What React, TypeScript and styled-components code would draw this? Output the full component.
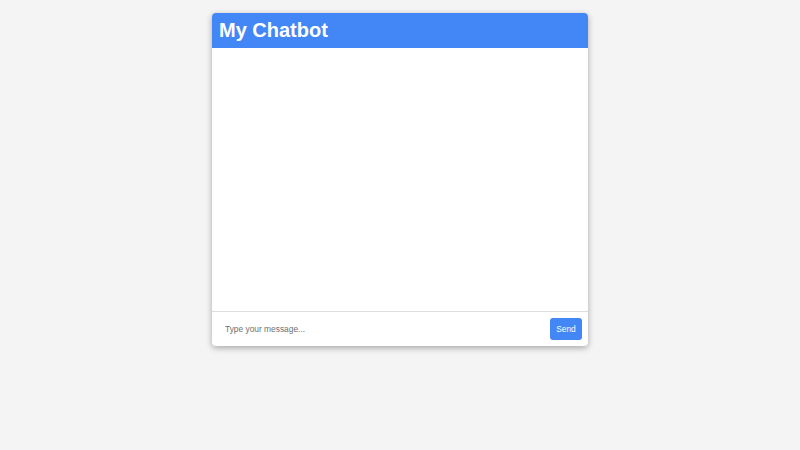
import { useState } from 'react';
import styled, { createGlobalStyle } from 'styled-components';

const GlobalStyle = createGlobalStyle`
  html, body {
    margin: 0;
    padding: 0;
    background: #f4f4f4;
    font-family: "Liberation Sans", Arial, sans-serif;
  }
`;

const Page = styled.div`
  min-height: 100vh;
  padding: 13px 0 20px;
  box-sizing: border-box;
`;

const ChatContainer = styled.div`
  width: 376px;
  height: 333px;
  margin: 0 auto;
  background: #ffffff;
  border-radius: 4px;
  box-shadow: 0 2px 6px rgba(0, 0, 0, 0.32);
  display: flex;
  flex-direction: column;
  overflow: hidden;
`;

const Header = styled.header`
  background: #4287f5;
  color: #ffffff;
  height: 35px;
  padding: 0 7px;
  display: flex;
  align-items: center;

  h1 {
    margin: 0;
    font-size: 20px;
    font-weight: bold;
  }
`;

const Messages = styled.div`
  flex: 1;
  overflow-y: auto;
  border-bottom: 1px solid #dddddd;
`;

const InputRow = styled.form`
  height: 34px;
  display: flex;
  align-items: center;
  padding: 0 6px 0 7px;
  gap: 6px;
`;

const MessageInput = styled.input`
  flex: 1;
  border: none;
  outline: none;
  padding: 0 6px;
  font-family: inherit;
  font-size: 8.4px;
  color: #333333;

  &::placeholder {
    color: #6f6f6f;
  }
`;

const SendButton = styled.button`
  width: 32px;
  height: 22px;
  padding: 0;
  border: none;
  border-radius: 3px;
  background: #4287f5;
  color: #ffffff;
  font-family: inherit;
  font-size: 8.4px;
  cursor: pointer;
`;

export default function App() {
  const [text, setText] = useState('');

  return (
    <>
      <GlobalStyle />
      <Page>
        <ChatContainer>
          <Header>
            <h1>My Chatbot</h1>
          </Header>
          <Messages />
          <InputRow onSubmit={(e) => { e.preventDefault(); setText(''); }}>
            <MessageInput
              value={text}
              onChange={(e) => setText(e.target.value)}
              placeholder="Type your message..."
            />
            <SendButton type="submit">Send</SendButton>
          </InputRow>
        </ChatContainer>
      </Page>
    </>
  );
}
